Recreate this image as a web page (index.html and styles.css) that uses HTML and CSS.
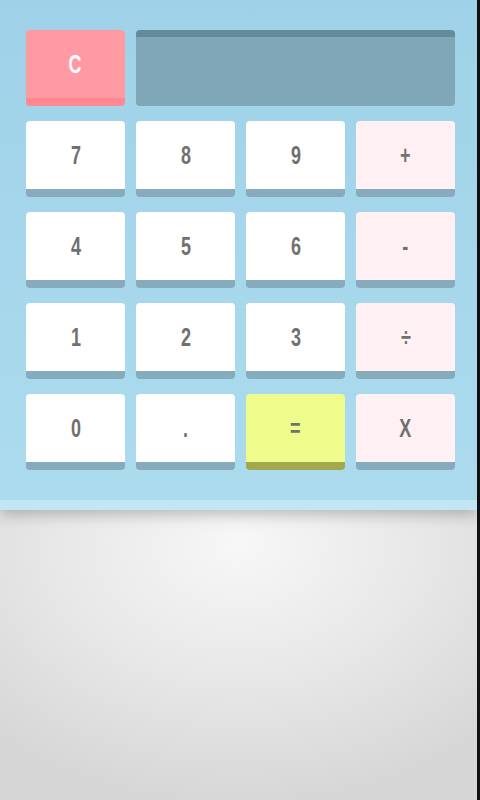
FILE: index.html
```html
<!DOCTYPE html>
<html>
<head>
    <title>Calculator</title>
    <link rel="stylesheet" href="styles.css">
</head>
<body>
    <div class="page">
        <div class="calculator">
            <div class="keys">
                <button class="key clear"><span>C</span></button>
                <div class="screen" id="screen"></div>

                <button class="key"><span>7</span></button>
                <button class="key"><span>8</span></button>
                <button class="key"><span>9</span></button>
                <button class="key operator"><span>+</span></button>

                <button class="key"><span>4</span></button>
                <button class="key"><span>5</span></button>
                <button class="key"><span>6</span></button>
                <button class="key operator"><span>-</span></button>

                <button class="key"><span>1</span></button>
                <button class="key"><span>2</span></button>
                <button class="key"><span>3</span></button>
                <button class="key operator"><span>÷</span></button>

                <button class="key"><span>0</span></button>
                <button class="key"><span>.</span></button>
                <button class="key equals"><span>=</span></button>
                <button class="key operator"><span>X</span></button>
            </div>
        </div>
        <div class="floor"></div>
    </div>
</body>
</html>
```

FILE: styles.css
```css
body {
    margin: 0;
    background: #121212;
    font-family: 'Liberation Sans', Arial, sans-serif;
}

.page {
    width: 477px;
    height: 800px;
    display: flex;
    flex-direction: column;
}

/* blue panel holding the keypad */
.calculator {
    position: relative;
    z-index: 1;
    padding: 30px 21px 30px 26px;
    background: linear-gradient(to bottom, #9fd2e8 0%, #acdbee 100%);
    border-bottom: 10px solid #c3e6f4;
    box-shadow: 0 4px 14px rgba(0,0,0,0.25);
}

/* grey lit surface under the panel */
.floor {
    flex: 1;
    background: radial-gradient(ellipse 75% 90% at 50% 12%, #f7f7f7 0%, #e8e8e8 50%, #d6d6d6 100%);
}

.keys {
    display: grid;
    grid-template-columns: repeat(4, 99px);
    grid-auto-rows: 76px;
    column-gap: 11px;
    row-gap: 15px;
}

.screen {
    grid-column: span 3;
    background: #7fa7b8;
    border-top: 7px solid #648b9a;
    border-radius: 4px;
}

.key {
    display: flex;
    align-items: center;
    justify-content: center;
    padding: 0;
    height: 76px;
    box-sizing: border-box;
    border: none;
    border-bottom: 8px solid #86abbc;
    border-radius: 4px;
    background: #fff;
    color: #707070;
    font-family: inherit;
    font-size: 25px;
    font-weight: bold;
    cursor: pointer;
}

.key span {
    display: inline-block;
    transform: scaleX(0.72);
}

.operator {
    background: #fff0f4;
}

.clear {
    background: #ff9aa2;
    border-bottom-color: #ff8892;
    color: #fff;
}

.equals {
    background: #eefc8c;
    border-bottom-color: #a3a84c;
}
```
